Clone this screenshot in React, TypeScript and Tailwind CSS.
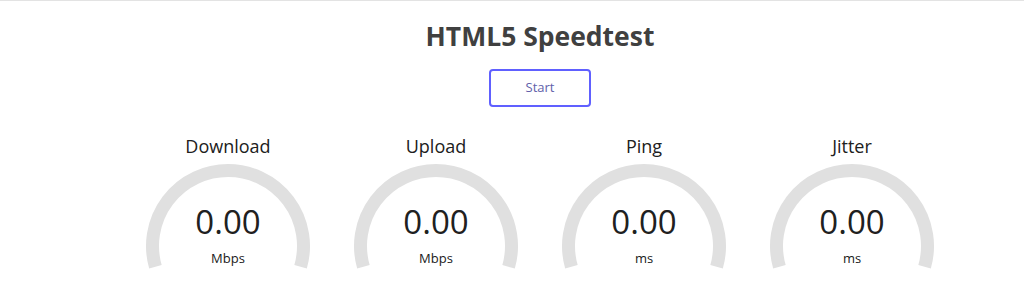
const gauges = [
  { label: 'Download', value: '0.00', unit: 'Mbps' },
  { label: 'Upload', value: '0.00', unit: 'Mbps' },
  { label: 'Ping', value: '0.00', unit: 'ms' },
  { label: 'Jitter', value: '0.00', unit: 'ms' },
];

// arc from bottom-left, over the top, to bottom-right
function arcPath(cx: number, cy: number, r: number, deg: number) {
  const a = (deg * Math.PI) / 180;
  const dx = r * Math.cos(a);
  const dy = r * Math.sin(a);
  return `M ${cx - dx} ${cy + dy} A ${r} ${r} 0 1 1 ${cx + dx} ${cy + dy}`;
}

function Gauge({ label, value, unit }: { label: string; value: string; unit: string }) {
  return (
    <div className="w-[208px] flex flex-col items-center">
      <div className="text-[18px] leading-[24px] text-[#202020]">{label}</div>
      <div className="relative mt-[4px] w-[168px] h-[112px]">
        <svg width="168" height="112" viewBox="0 0 168 112" className="absolute inset-0">
          <path d={arcPath(84, 84, 75.5, 16)} fill="none" stroke="#e0e0e0" strokeWidth="13" />
        </svg>
        <div className="absolute left-0 right-0 top-[39px] text-center text-[33px] leading-[42px] text-[#202020]">
          {value}
        </div>
        <div className="absolute left-0 right-0 top-[87px] text-center text-[13px] leading-[18px] text-[#202020]">
          {unit}
        </div>
      </div>
    </div>
  );
}

export default function App() {
  return (
    <div
      className="min-h-screen bg-white border-t border-[#e3e3e3]"
      style={{ fontFamily: '"Open Sans", "Noto Sans", sans-serif' }}
    >
      <div className="pl-[56px] flex flex-col items-center">
        <h1 className="mt-[15px] text-[26.5px] leading-[40px] font-bold text-[#404040]">HTML5 Speedtest</h1>
        <button className="mt-[13px] w-[102px] h-[38px] border-2 border-[#6060ff] rounded-[4px] text-[13px] text-[#6060aa] bg-white">
          Start
        </button>
        <div className="flex mt-[27px]">
          {gauges.map((g) => (
            <Gauge key={g.label} {...g} />
          ))}
        </div>
      </div>
    </div>
  );
}
